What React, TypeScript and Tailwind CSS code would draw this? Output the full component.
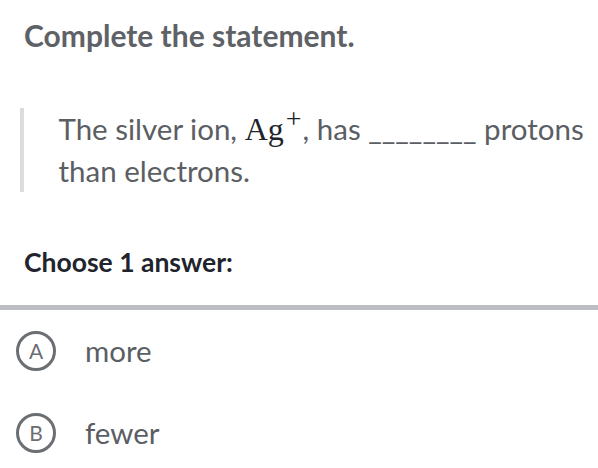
import React from 'react';

const choices = [
  { letter: 'A', text: 'more' },
  { letter: 'B', text: 'fewer' },
];

const App: React.FC = () => {
  return (
    <div className="w-[598px] h-[468px] bg-white overflow-hidden font-['Lato','Noto_Sans',sans-serif]">
      {/* Prompt */}
      <div className="px-6 pt-[15px]">
        <h1 className="text-[30px] leading-[40px] font-bold text-[#5e6166]">Complete the statement.</h1>
      </div>

      <div className="mt-[53px] ml-5 flex">
        <div className="w-[6px] bg-[#dbdcdd]" />
        <p className="pl-[34px] text-[29.5px] leading-[42px] text-[#5b5e63]">
          The silver ion,{' '}
          <span className="font-['Liberation_Serif',serif] text-[32px] leading-none text-[#21242c]">
            Ag<span className="relative -top-[12px] ml-[2px] mr-[1px] text-[28px]">+</span>
          </span>
          , has ________ protons than electrons.
        </p>
      </div>

      <div className="px-6 mt-[53px]">
        <h2 className="text-[26.5px] leading-[34px] font-bold text-[#21242c]">Choose 1 answer:</h2>
      </div>

      <div className="mt-[26px] h-[5px] bg-[#bcbec3]" />

      {/* Choices */}
      <ul>
        {choices.map((c) => (
          <li key={c.letter} className="flex items-center h-[82px] pl-4">
            <span className="w-[40px] h-[40px] rounded-full border-[3px] border-[#6b6e73] flex items-center justify-center text-[21px] text-[#6b6e73]">
              {c.letter}
            </span>
            <span className="ml-[29px] text-[29.5px] text-[#5b5e63]">{c.text}</span>
          </li>
        ))}
      </ul>
    </div>
  );
};

export default App;
